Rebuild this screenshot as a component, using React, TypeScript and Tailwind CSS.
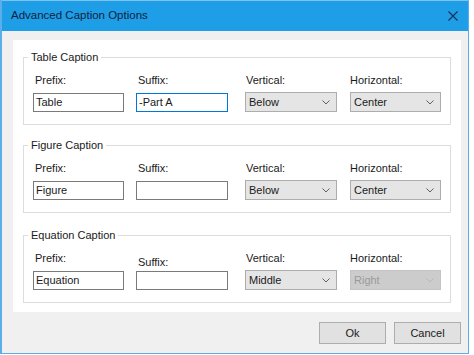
const font = { fontFamily: '"Liberation Sans", Arial, sans-serif' };

function Chevron({ disabled }: { disabled?: boolean }) {
  return (
    <svg width="8" height="5" viewBox="0 0 8 5" className="shrink-0">
      <path
        d="M0.5 0.5 L4 4 L7.5 0.5"
        fill="none"
        stroke={disabled ? "#b8b8b8" : "#606060"}
        strokeWidth="1"
      />
    </svg>
  );
}

function TextBox({ value, focused }: { value: string; focused?: boolean }) {
  return (
    <div
      className={`h-[19px] bg-white border flex items-center pl-[2px] text-[#1a1a1a] ${
        focused ? "border-[#0078d7]" : "border-[#7a7a7a]"
      }`}
    >
      {value}
    </div>
  );
}

function Combo({ value, disabled }: { value: string; disabled?: boolean }) {
  return (
    <div
      className={`h-[20px] border flex items-center justify-between pl-[3px] pr-[6px] ${
        disabled
          ? "bg-[#cccccc] border-[#c4c4c4] text-[#9a9a9a]"
          : "bg-[#e5e5e5] border-[#adadad] text-[#1a1a1a]"
      }`}
    >
      <span>{value}</span>
      <Chevron disabled={disabled} />
    </div>
  );
}

type Group = {
  title: string;
  prefix: string;
  suffix: string;
  suffixFocused?: boolean;
  suffixLow?: boolean;
  vertical: string;
  horizontal: string;
  horizontalDisabled?: boolean;
};

const GROUPS: Group[] = [
  { title: "Table Caption", prefix: "Table", suffix: "-Part A", suffixFocused: true, vertical: "Below", horizontal: "Center" },
  { title: "Figure Caption", prefix: "Figure", suffix: "", vertical: "Below", horizontal: "Center" },
  { title: "Equation Caption", prefix: "Equation", suffix: "", suffixLow: true, vertical: "Middle", horizontal: "Right", horizontalDisabled: true },
];

function CaptionGroup({ g, className }: { g: Group; className?: string }) {
  return (
    <fieldset className={`border border-[#dcdcdc] px-[9px] pb-[12px] ${className ?? ""}`}>
      <legend className="-ml-[5px] px-[3px] leading-[16px] text-[#1a1a1a]">{g.title}</legend>
      <div className="flex pt-[7px]">
        <div className="w-[91px] flex flex-col">
          <span className="pl-[2px] leading-[16px] h-[16px] mb-[5px]">Prefix:</span>
          <TextBox value={g.prefix} />
        </div>
        <div className="w-[92px] ml-[12px] flex flex-col">
          <span className={`pl-[2px] leading-[16px] h-[16px] mb-[5px] ${g.suffixLow ? "translate-y-[4px]" : ""}`}>
            Suffix:
          </span>
          <TextBox value={g.suffix} focused={g.suffixFocused} />
        </div>
        <div className="w-[92px] ml-[17px] flex flex-col">
          <span className="pl-[1px] leading-[16px] h-[16px] mb-[4px]">Vertical:</span>
          <Combo value={g.vertical} />
        </div>
        <div className="w-[91px] ml-[13px] flex flex-col">
          <span className="leading-[16px] h-[16px] mb-[4px]">Horizontal:</span>
          <Combo value={g.horizontal} disabled={g.horizontalDisabled} />
        </div>
      </div>
    </fieldset>
  );
}

export default function App() {
  return (
    <div className="w-[474px] h-[355px] bg-white text-[11px] text-[#1a1a1a]" style={font}>
      <div className="w-[469px] h-[354px] border-l-2 border-r border-b border-[#5aaeea] bg-[#f0f0f0] flex flex-col">
        {/* title bar */}
        <div className="h-[31px] bg-[#1f9ee8] border-t border-[#7cc3f2] flex items-center justify-between pl-[9px] pr-[8px]">
          <span className="text-[11.5px] text-[#10223a]">Advanced Caption Options</span>
          <svg width="10" height="10" viewBox="0 0 10 10" className="mr-[2px]">
            <path d="M0.5 0.5 L9.5 9.5 M9.5 0.5 L0.5 9.5" stroke="#15304f" strokeWidth="1.1" />
          </svg>
        </div>

        {/* content */}
        <div className="ml-[11px] mt-[9px] w-[448px] h-[272px] bg-white pl-[10px] pr-[11px] pt-[9px]">
          <CaptionGroup g={GROUPS[0]} />
          <CaptionGroup g={GROUPS[1]} className="mt-[12px]" />
          <CaptionGroup g={GROUPS[2]} className="mt-[14px]" />
        </div>

        {/* buttons */}
        <div className="flex justify-end gap-[8px] mt-[10px] pr-[7px]">
          <button className="w-[67px] h-[22px] bg-[#e1e1e1] border border-[#adadad] text-[#1a1a1a]">Ok</button>
          <button className="w-[67px] h-[22px] bg-[#e1e1e1] border border-[#adadad] text-[#1a1a1a]">Cancel</button>
        </div>
      </div>
    </div>
  );
}
